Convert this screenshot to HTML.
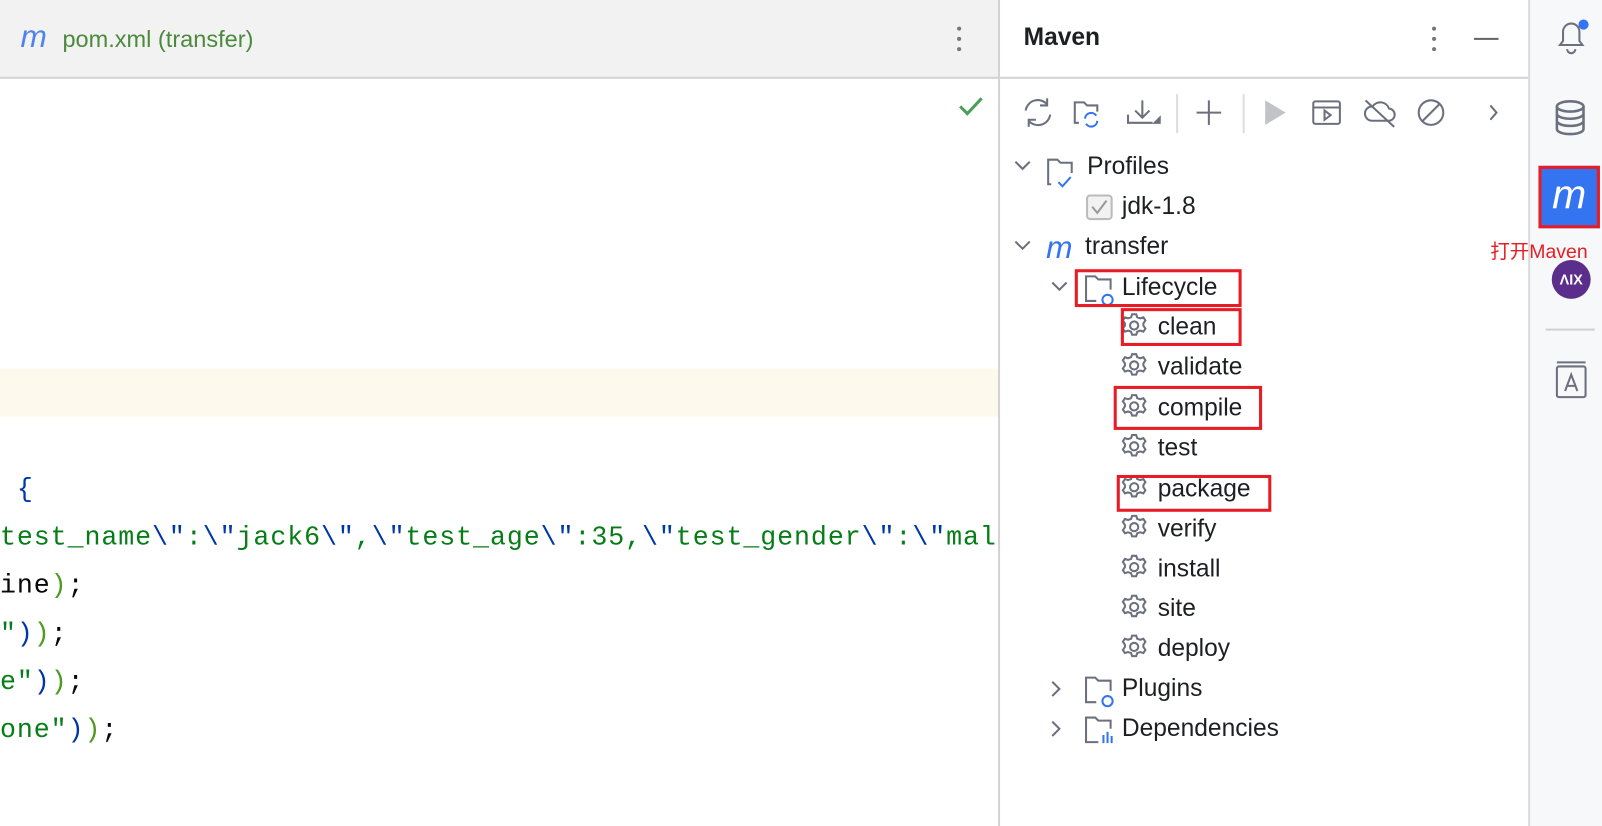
<!DOCTYPE html><html><head><meta charset="utf-8"><style>
*{margin:0;padding:0;box-sizing:border-box}
html,body{width:1602px;height:826px;overflow:hidden;background:#fff}
#w{position:absolute;left:0;top:0;width:1565px;height:807px;transform:scale(1.0236);transform-origin:0 0;font-family:"Liberation Sans","Noto Sans CJK SC",sans-serif}
.a{position:absolute}
#ed{position:absolute;left:0;top:0;width:975px;height:807px;overflow:hidden}
.code{font-family:"Liberation Mono",monospace;font-size:26px;letter-spacing:0.9px;color:#067d17;white-space:pre;position:absolute;left:0;line-height:30px}
.b{color:#0037a6}.k{color:#080808}.g{color:#4f9a1f}
.t{position:absolute;font-size:24px;color:#1e1f22;line-height:30px}
.rb{position:absolute;border:3px solid #e81c24}
svg{position:absolute;overflow:visible}
</style></head><body><div id="w">
<div id="ed">
<div class="a" style="left:0;top:0;width:975px;height:77px;background:#f2f2f2;border-bottom:2px solid #d3d3d3"></div>
<div class="a" style="left:20px;top:18px;font-size:31px;font-style:italic;color:#4f83f0">m</div>
<div class="a" style="left:61px;top:25px;font-size:23px;color:#4b8a3c">pom.xml (transfer)</div>
<svg style="left:935px;top:26px" width="4" height="24"><circle cx="2" cy="2" r="2" fill="#777"/><circle cx="2" cy="12" r="2" fill="#777"/><circle cx="2" cy="22" r="2" fill="#777"/></svg>
<svg style="left:937px;top:94px" width="24" height="20"><path d="M1 10 L8 17 L22 2" stroke="#4aa05a" stroke-width="3" fill="none"/></svg>
<div class="a" style="left:0;top:360px;width:975px;height:47px;background:#fdf9ec"></div>
<div class="code" style="top:463px"> <span class="b">{</span></div>
<div class="code" style="top:510px">test_name<span class="b">\"</span>:<span class="b">\"</span>jack6<span class="b">\"</span>,<span class="b">\"</span>test_age<span class="b">\"</span>:35,<span class="b">\"</span>test_gender<span class="b">\"</span>:<span class="b">\"</span>mal</div>
<div class="code" style="top:557px"><span class="k">ine</span><span class="g">)</span><span class="k">;</span></div>
<div class="code" style="top:604px">"<span class="b">)</span><span class="g">)</span><span class="k">;</span></div>
<div class="code" style="top:651px">e"<span class="b">)</span><span class="g">)</span><span class="k">;</span></div>
<div class="code" style="top:698px">one"<span class="b">)</span><span class="g">)</span><span class="k">;</span></div>
</div>
<div class="a" style="left:975px;top:0;width:2px;height:807px;background:#d3d3d3"></div>
<div class="a" style="left:977px;top:0;width:516px;height:77px;border-bottom:2px solid #d3d3d3;background:#fff"></div>
<div class="a" style="left:1000px;top:23px;font-size:24px;font-weight:bold;color:#1e1f22">Maven</div>
<svg style="left:1399px;top:26px" width="4" height="24"><circle cx="2" cy="2" r="2" fill="#777"/><circle cx="2" cy="12" r="2" fill="#777"/><circle cx="2" cy="22" r="2" fill="#777"/></svg>
<div class="a" style="left:1440px;top:37px;width:24px;height:2px;background:#666"></div>
<svg style="left:998px;top:94px" width="480" height="32" fill="none" stroke="#6c707e" stroke-width="2">
<path d="M4 14a12 12 0 0 1 21-6M28 18a12 12 0 0 1-21 6M25 2v7h-7M7 30v-7h7"/>
<path d="M56 26h-4V6h9l3 3h10v6"/><path d="M62 22a6 6 0 0 1 11-3M74 24a6 6 0 0 1-11 3" stroke="#3574f0"/>
<path d="M118 4v16M111 14l7 7 7-7M104 18v8h24"/><path d="M130 26l5-5v5z" fill="#6c707e"/>
<path d="M152 -2v38M217 -2v38" stroke="#ddd"/>
<path d="M183 4v24M171 16h24"/>
<path d="M238 4l20 12-20 12z" fill="#c2c3c7" stroke="none"/>
<rect x="285" y="5" width="26" height="22" rx="2"/><path d="M285 11h26M296 14v9l6-4.5z"/>
<path d="M342 24h16a6 6 0 0 0 1-12 9 9 0 0 0-16-2 7 7 0 0 0-1 14zM336 4l28 26"/>
<circle cx="400" cy="16" r="12"/><path d="M392 24l16-16"/>
<path d="M458 9l6 7-6 7"/>
</svg>
<svg style="left:990px;top:154px" width="300" height="580" fill="none" stroke="#6c707e" stroke-width="2">
<path d="M2 4l7 7 7-7M2 82l7 7 7-7M38 122l7 7 7-7"/>
<path d="M38 512l7 7-7 7M38 551l7 7-7 7"/>
<path d="M37 26h-3V2h9l3 3h11v10"/><path d="M44 24l4 4 8-9" stroke="#3574f0"/>
<rect x="72" y="37" width="24" height="23" rx="3" stroke="#bbb" fill="#f2f2f2"/><path d="M77 48l5 6 9-12" stroke="#999"/>
<path d="M81 140h-10V116h9l3 3h12v10"/><circle cx="92" cy="139" r="5" stroke="#3574f0"/>
<path d="M81 532h-10V508h9l3 3h12v10"/><circle cx="92" cy="531" r="5" stroke="#3574f0"/>
<path d="M83 571h-12V547h9l3 3h12v8"/><path d="M88 572v-8M92 572v-11M96 572v-7" stroke="#3574f0"/>
</svg>
<div class="a" style="left:1022px;top:224px;font-size:31px;font-style:italic;color:#3574f0">m</div>
<div class="t" style="left:1062px;top:148px">Profiles</div>
<div class="t" style="left:1096px;top:187px">jdk-1.8</div>
<div class="t" style="left:1060px;top:226px">transfer</div>
<div class="t" style="left:1096px;top:266px">Lifecycle</div>
<svg style="left:1096px;top:305px" width="26" height="340" fill="none" stroke="#6c707e" stroke-width="2">
<defs><g id="gear"><circle cx="12" cy="13" r="4"/><path d="M10 2h4l1 3 3 1 3-1 2 3-2 3v2l2 3-2 3-3-1-3 1-1 3h-4l-1-3-3-1-3 1-2-3 2-3v-2l-2-3 2-3 3 1 3-1z"/></g></defs>
<use href="#gear" y="0"/><use href="#gear" y="39"/><use href="#gear" y="79"/><use href="#gear" y="118"/><use href="#gear" y="158"/><use href="#gear" y="197"/><use href="#gear" y="236"/><use href="#gear" y="275"/><use href="#gear" y="314"/>
</svg>
<div class="t" style="left:1131px;top:305px">clean</div>
<div class="t" style="left:1131px;top:344px">validate</div>
<div class="t" style="left:1131px;top:384px">compile</div>
<div class="t" style="left:1131px;top:423px">test</div>
<div class="t" style="left:1131px;top:463px">package</div>
<div class="t" style="left:1131px;top:502px">verify</div>
<div class="t" style="left:1131px;top:541px">install</div>
<div class="t" style="left:1131px;top:580px">site</div>
<div class="t" style="left:1131px;top:619px">deploy</div>
<div class="t" style="left:1096px;top:658px">Plugins</div>
<div class="t" style="left:1096px;top:697px">Dependencies</div>
<div class="rb" style="left:1050px;top:263px;width:163px;height:37px"></div>
<div class="rb" style="left:1095px;top:301px;width:118px;height:37px"></div>
<div class="rb" style="left:1088px;top:377px;width:145px;height:43px"></div>
<div class="rb" style="left:1091px;top:464px;width:151px;height:36px"></div>
<div class="a" style="left:1493px;top:0;width:2px;height:807px;background:#d8d8d8"></div>
<div class="a" style="left:1495px;top:0;width:70px;height:807px;background:#f7f8fa"></div>
<svg style="left:1518px;top:17px" width="40" height="40" fill="none" stroke="#6c707e" stroke-width="2"><path d="M6 27h22l-3-4v-9a8 8 0 0 0-16 0v9zM13 31a4 4 0 0 0 8 0"/><circle cx="29" cy="7" r="5" fill="#3574f0" stroke="none"/></svg>
<svg style="left:1519px;top:98px" width="32" height="36" fill="none" stroke="#6c707e" stroke-width="2.5"><ellipse cx="15" cy="6" rx="13" ry="5"/><path d="M2 6v22c0 3 6 5 13 5s13-2 13-5V6M2 13c0 3 6 5 13 5s13-2 13-5M2 20c0 3 6 5 13 5s13-2 13-5"/></svg>
<div class="rb" style="left:1503px;top:162px;width:60px;height:61px;background:#3574f0;border-color:#e81c24"></div>
<div class="a" style="left:1503px;top:168px;width:60px;text-align:center;font-size:40px;line-height:44px;font-style:italic;color:#fff">m</div>
<div class="a" style="left:1456px;top:231px;font-size:19px;color:#e81c24;white-space:nowrap">打开Maven</div>
<div class="a" style="left:1516px;top:254px;width:38px;height:38px;border-radius:50%;background:#5a2e8a;color:#fff;font-size:14px;font-weight:bold;text-align:center;line-height:38px">ΛIX</div>
<div class="a" style="left:1510px;top:321px;width:48px;height:2px;background:#d0d0d0"></div>
<svg style="left:1519px;top:352px" width="32" height="38" fill="none" stroke="#6c707e" stroke-width="2"><rect x="2" y="6" width="28" height="30" rx="2"/><path d="M2 2h28"/><path d="M10 30l6-16 6 16M12 25h8"/></svg>
</div></body></html>
